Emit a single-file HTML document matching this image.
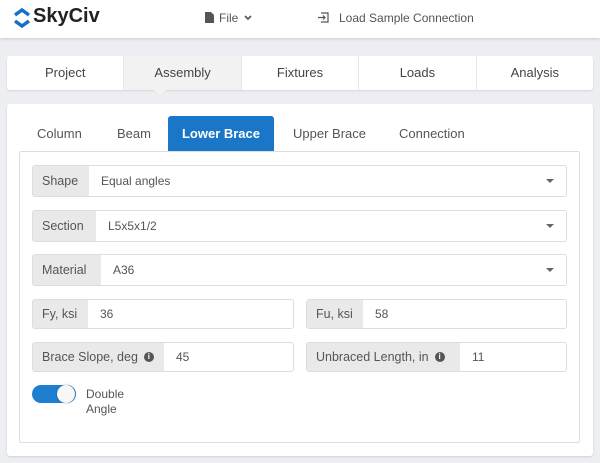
<!DOCTYPE html><html><head><style>
*{box-sizing:border-box;margin:0;padding:0}
body{width:600px;height:463px;background:#eceef1;font-family:"Liberation Sans",sans-serif;font-size:12px;color:#555;position:relative;overflow:hidden}
.abs{position:absolute}
.hdr{left:0;top:0;width:600px;height:38px;background:#fff;box-shadow:0 1px 3px rgba(0,0,0,.15)}
.nav{left:7px;top:56px;width:586px;height:34px;background:#fff;border-radius:3px;display:flex;box-shadow:0 1px 2px rgba(0,0,0,.1)}
.nav div{flex:1;text-align:center;line-height:34px;font-size:13px;color:#444;border-right:1px solid #e6e6e6}
.nav div:last-child{border:none}
.card{left:7px;top:104px;width:586px;height:352px;background:#fff;border-radius:3px;box-shadow:0 1px 2px rgba(0,0,0,.12)}
.sub{position:absolute;top:116px;height:35px;line-height:35px;font-size:13px;color:#555}
.panel{left:19px;top:151px;width:561px;height:292px;border:1px solid #ddd;border-radius:2px;background:#fff}
.f{position:absolute;border:1px solid #ddd;border-radius:3px;display:flex;background:#fff;overflow:hidden}
.f .l{background:#e9e9e9;color:#555;font-size:12.5px;padding-left:9px;display:flex;align-items:center}
.f .v{padding-left:12px;display:flex;align-items:center;color:#555;font-size:12px;flex:1}
.car{position:absolute;right:12px;top:13px;border-left:4px solid transparent;border-right:4px solid transparent;border-top:4px solid #666}
.i{display:inline-block;width:10px;height:10px;border-radius:50%;background:#555;color:#fff;font-size:8px;line-height:10px;text-align:center;font-weight:bold;margin-left:6px}
</style></head><body>
<div class="abs hdr"></div>
<svg class="abs" style="left:12px;top:7px" width="20" height="22" viewBox="0 0 20 22"><path d="M3 8 L10 3 L17 8" stroke="#1a6fc4" stroke-width="3.5" fill="none"/><path d="M3 14 L10 19 L17 14" stroke="#1a6fc4" stroke-width="3.5" fill="none"/></svg>
<div class="abs" style="left:33px;top:5px;font-size:20px;font-weight:bold;color:#222">SkyCiv</div>
<svg class="abs" style="left:205px;top:12px" width="9" height="11"><path d="M0 0H6L9 3V11H0Z" fill="#555"/></svg>
<div class="abs" style="left:219px;top:11px;font-size:12px;color:#555">File</div>
<svg class="abs" style="left:244px;top:15px" width="8" height="6"><path d="M1 1L4 4L7 1" stroke="#555" stroke-width="1.6" fill="none"/></svg>
<svg class="abs" style="left:317px;top:12px" width="12" height="11"><path d="M4 1H11V10H4M1 5.5H8M6 3.5L8 5.5L6 7.5" stroke="#555" stroke-width="1.2" fill="none"/></svg>
<div class="abs" style="left:339px;top:11px;font-size:12px;color:#555">Load Sample Connection</div>
<div class="abs nav"><div>Project</div><div style="background:#f2f2f2">Assembly</div><div>Fixtures</div><div>Loads</div><div>Analysis</div></div>
<div class="abs" style="left:154px;top:90px;border-left:6px solid transparent;border-right:6px solid transparent;border-top:5px solid #f2f2f2"></div>
<div class="abs card"></div>
<div class="sub" style="left:37px">Column</div>
<div class="sub" style="left:117px">Beam</div>
<div class="sub" style="left:168px;width:106px;text-align:center;background:#1a76c6;color:#fff;font-weight:bold;border-radius:3px 3px 0 0">Lower Brace</div>
<div class="sub" style="left:293px">Upper Brace</div>
<div class="sub" style="left:399px">Connection</div>
<div class="abs panel"></div>
<div class="f" style="left:32px;top:165px;width:535px;height:32px"><div class="l" style="width:56px">Shape</div><div class="v">Equal angles</div><div class="car"></div></div>
<div class="f" style="left:32px;top:210px;width:535px;height:32px"><div class="l" style="width:63px">Section</div><div class="v">L5x5x1/2</div><div class="car"></div></div>
<div class="f" style="left:32px;top:254px;width:535px;height:32px"><div class="l" style="width:68px">Material</div><div class="v">A36</div><div class="car"></div></div>
<div class="f" style="left:32px;top:299px;width:262px;height:30px"><div class="l" style="width:55px">Fy, ksi</div><div class="v">36</div></div>
<div class="f" style="left:306px;top:299px;width:261px;height:30px"><div class="l" style="width:56px">Fu, ksi</div><div class="v">58</div></div>
<div class="f" style="left:32px;top:342px;width:262px;height:30px"><div class="l" style="width:131px">Brace Slope, deg<span class="i">i</span></div><div class="v">45</div></div>
<div class="f" style="left:306px;top:342px;width:261px;height:30px"><div class="l" style="width:153px">Unbraced Length, in<span class="i">i</span></div><div class="v">11</div></div>
<div class="abs" style="left:32px;top:385px;width:44px;height:18px;border-radius:9px;background:#1e7fd0"></div>
<div class="abs" style="left:57px;top:385px;width:18px;height:18px;border-radius:50%;background:#f7f7f7;box-shadow:0 0 2px rgba(0,0,0,.3)"></div>
<div class="abs" style="left:86px;top:387px;font-size:12px;color:#555;line-height:15px">Double<br>Angle</div>
</body></html>
